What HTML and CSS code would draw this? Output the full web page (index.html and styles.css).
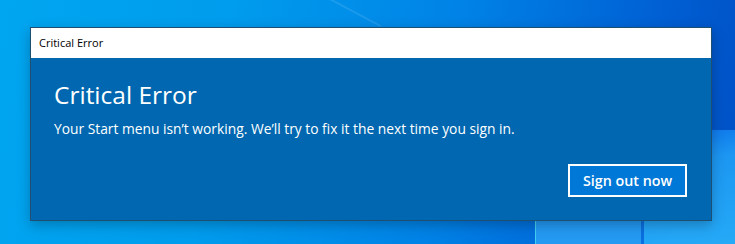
FILE: index.html
```html
<!DOCTYPE html>
<html lang="en">
<head>
    <meta charset="UTF-8">
    <title>Critical Error</title>
    <link rel="stylesheet" href="styles.css">
</head>
<body>
    <div class="desktop">
        <div class="pane pane-left"></div>
        <div class="pane pane-right"></div>
        <div class="beam"></div>

        <div class="dialog">
            <div class="titlebar">Critical Error</div>
            <div class="content">
                <h1>Critical Error</h1>
                <p>Your Start menu isn’t working. We’ll try to fix it the next time you sign in.</p>
                <div class="actions">
                    <button class="signout-btn">Sign out now</button>
                </div>
            </div>
        </div>
    </div>
</body>
</html>
```

FILE: styles.css
```css
body {
    margin: 0;
    font-family: "Open Sans", "Noto Sans", sans-serif;
    overflow: hidden;
}
.desktop {
    position: relative;
    width: 735px;
    height: 244px;
    overflow: hidden;
    padding-top: 27px;
    box-sizing: border-box;
    background: linear-gradient(100deg, #00a6f0 0%, #009ced 30%, #0082e6 60%, #0060d4 85%, #004fc4 100%);
}
/* windows logo panes on the wallpaper */
.pane {
    position: absolute;
    height: 140px;
}
.pane-left {
    top: 150px;
    left: 535px;
    width: 105px;
    background: linear-gradient(180deg, #1a8ff0, #2aa0f4);
    border-left: 1px solid #40d0f0;
}
.pane-right {
    top: 130px;
    left: 641px;
    width: 94px;
    background: linear-gradient(170deg, #0a6ee8 0%, #1c96f2 25%, #28b0f8 100%);
    border-left: 3px solid #0a6fe0;
}
.beam {
    position: absolute;
    left: 340px;
    top: -40px;
    width: 2px;
    height: 90px;
    background: rgba(255, 255, 255, 0.1);
    transform: rotate(-62deg);
}
.dialog {
    position: relative;
    margin-left: 30px;
    width: 680px;
    height: 192px;
    border: 1px solid #1d4f73;
    box-shadow: 0 4px 12px rgba(0, 0, 0, 0.25);
    background-color: #0067b0;
    display: flex;
    flex-direction: column;
}
.titlebar {
    height: 30px;
    line-height: 30px;
    background-color: white;
    color: #000;
    font-size: 11px;
    padding-left: 8px;
}
.content {
    flex: 1;
    padding: 20px 24px 0 23px;
    color: #fff;
}
.content h1 {
    margin: 0;
    font-weight: 400;
    font-size: 24.5px;
    line-height: 34px;
}
.content p {
    margin: 7px 0 0;
    font-size: 13.8px;
    line-height: 20px;
}
.actions {
    display: flex;
    justify-content: flex-end;
    margin-top: 25px;
}
.signout-btn {
    width: 119px;
    height: 33px;
    border: 2px solid #fff;
    background-color: #0078d7;
    color: #fff;
    font-family: inherit;
    font-size: 14.3px;
    font-weight: 600;
    padding: 0;
}
```
